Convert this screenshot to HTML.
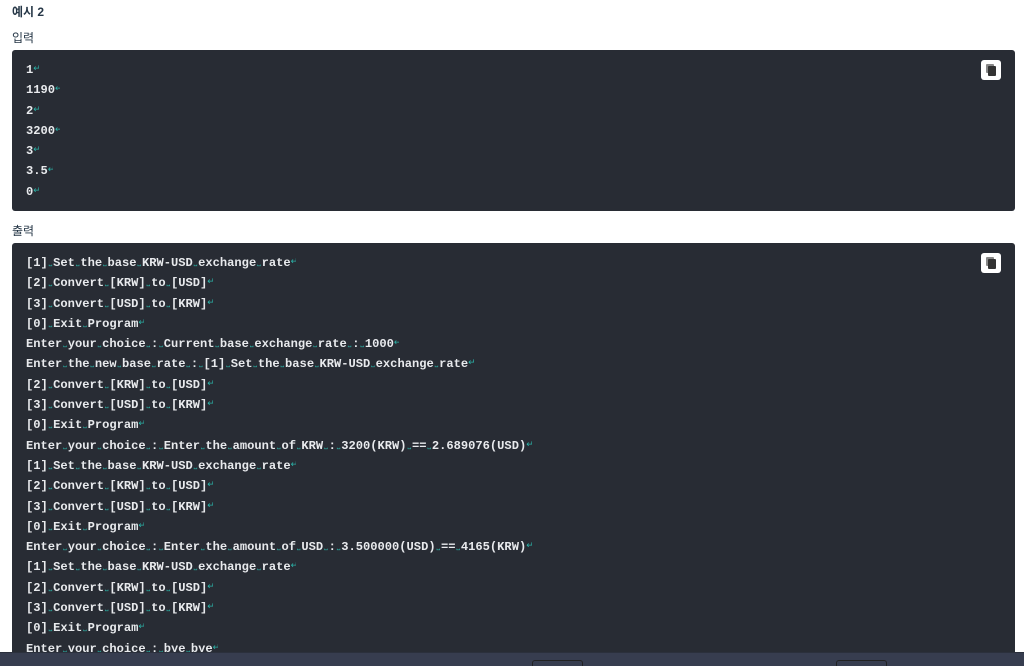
<!DOCTYPE html>
<html><head><meta charset="utf-8"><style>
html,body{margin:0;padding:0;background:#fff;width:1024px;height:666px;overflow:hidden;position:relative;font-family:"Liberation Sans","Noto Sans CJK KR",sans-serif}
.h{position:absolute;left:12px;font-size:12px;color:#263747}
.box{position:absolute;left:12px;width:1003px;background:#282c34;border-radius:3px}
pre{margin:0;padding:10px 0 0 14px;font-family:"Liberation Mono",monospace;font-weight:bold;font-size:12.1px;line-height:20.3px;color:#e8eaed;white-space:pre}
i,b.r{font-style:normal;color:#2bb3a8;font-weight:normal;display:inline-block;width:1ch;height:10px;line-height:10px;overflow:hidden;vertical-align:-1px;font-size:9px;text-align:center}
.cp{position:absolute;right:14px;top:10px;width:20px;height:20px;background:#fff;border-radius:3px}
.cp:before{content:"";position:absolute;left:5px;top:4px;width:8px;height:9px;background:#888;border-radius:1px}
.cp:after{content:"";position:absolute;left:7px;top:6px;width:8px;height:10px;background:#333;border-radius:1px}
.bar{position:absolute;left:0;top:652px;width:1024px;height:14px;background:#373d4f;border-top:1px solid #2b303c}
.bt{position:absolute;top:7px;width:49px;height:10px;border:1px solid #222;border-radius:3px}
</style></head><body>
<div class="h" style="top:3px;font-weight:bold">예시 2</div>
<div class="h" style="top:29px">입력</div>
<div class="box" style="top:50px;height:161px"><div class="cp"></div><pre class="c">1
1190
2
3200
3
3.5
0</pre></div>
<div class="h" style="top:222px">출력</div>
<div class="box" style="top:243px;height:430px"><div class="cp"></div><pre class="c">[1] Set the base KRW-USD exchange rate
[2] Convert [KRW] to [USD]
[3] Convert [USD] to [KRW]
[0] Exit Program
Enter your choice : Current base exchange rate : 1000
Enter the new base rate : [1] Set the base KRW-USD exchange rate
[2] Convert [KRW] to [USD]
[3] Convert [USD] to [KRW]
[0] Exit Program
Enter your choice : Enter the amount of KRW : 3200(KRW) == 2.689076(USD)
[1] Set the base KRW-USD exchange rate
[2] Convert [KRW] to [USD]
[3] Convert [USD] to [KRW]
[0] Exit Program
Enter your choice : Enter the amount of USD : 3.500000(USD) == 4165(KRW)
[1] Set the base KRW-USD exchange rate
[2] Convert [KRW] to [USD]
[3] Convert [USD] to [KRW]
[0] Exit Program
Enter your choice : bye bye</pre></div>
<div class="bar"><div class="bt" style="left:532px"></div><div class="bt" style="left:836px"></div></div>
<script>
document.querySelectorAll('pre.c').forEach(function(p){
  var lines=p.textContent.split('\n');
  p.innerHTML=lines.map(function(l){
    return l.replace(/&/g,'&amp;').replace(/</g,'&lt;').replace(/ /g,'<i>˽</i>')+'<b class="r">↵</b>';
  }).join('\n');
});
</script>
</body></html>
